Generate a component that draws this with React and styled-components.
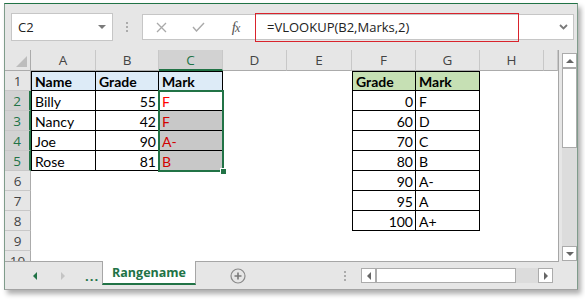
import React from 'react'
import styled, { createGlobalStyle, css } from 'styled-components'

const GREEN = '#217346'

const GlobalStyle = createGlobalStyle`
  html, body {
    margin: 0;
    padding: 0;
    background: #fff;
  }
  body {
    width: 585px;
    height: 300px;
    overflow: hidden;
    font-family: Lato, "Liberation Sans", sans-serif;
  }
`

const Page = styled.div`
  padding: 3px 0 0 4px;
`

const Window = styled.div`
  width: 574px;
  height: 287px;
  box-sizing: border-box;
  border: 1px solid #7f9c8b;
  border-top-color: ${GREEN};
  border-bottom-color: #a3a3a3;
  box-shadow: 3px 4px 5px rgba(0, 0, 0, 0.32);
  background: #e6e6e6;
  display: flex;
  flex-direction: column;
  overflow: hidden;
`

/* ---------- formula toolbar ---------- */

const Toolbar = styled.div`
  height: 46px;
  flex: none;
  display: flex;
  align-items: center;
  padding: 0 0 0 6px;
  box-sizing: border-box;
  font-family: "Open Sans", "Liberation Sans", sans-serif;
`

const NameBox = styled.div`
  width: 102px;
  height: 28px;
  box-sizing: border-box;
  background: #fff;
  border: 1px solid #c6c6c6;
  display: flex;
  align-items: center;
  justify-content: space-between;
  padding: 0 6px 0 6px;
  font-size: 13px;
  color: #222;
`

const DownTriangle = styled.span`
  width: 0;
  height: 0;
  border-left: 4px solid transparent;
  border-right: 4px solid transparent;
  border-top: 4px solid #7a7a7a;
`

const Grip = styled.div`
  display: flex;
  flex-direction: column;
  gap: 2px;
  margin: 0 ${p => p.$right}px 0 ${p => p.$left}px;
  span {
    width: 2px;
    height: 2px;
    background: #ababab;
  }
`

const FormulaBar = styled.div`
  width: 432px;
  height: 26px;
  box-sizing: border-box;
  background: #fff;
  border: 1px solid #c6c6c6;
  display: flex;
  align-items: center;
`

const FuncArea = styled.div`
  width: 112px;
  display: flex;
  align-items: center;
`

const IconSlot = styled.div`
  width: 37px;
  display: flex;
  justify-content: center;
  align-items: center;
`

const Fx = styled.span`
  font-family: "Liberation Serif", serif;
  font-style: italic;
  font-size: 15px;
  color: #555;
  letter-spacing: -1px;
  small {
    font-size: 12px;
  }
`

const FormulaInput = styled.div`
  width: 264px;
  height: 29px;
  box-sizing: border-box;
  border: 1px solid #d9232c;
  display: flex;
  align-items: center;
  padding-left: 11px;
  font-size: 13px;
  color: #222;
`

const FormulaRest = styled.div`
  flex: 1;
  display: flex;
  justify-content: flex-end;
  padding-right: 5px;
`

/* ---------- sheet ---------- */

const Body = styled.div`
  height: 212px;
  flex: none;
  display: flex;
`

const Sheet = styled.div`
  width: 554px;
  height: 212px;
  box-sizing: border-box;
  background: #fff;
  border-right: 1px solid #a6a6a6;
  border-bottom: 1px solid #a6a6a6;
  overflow: hidden;
  display: grid;
  grid-template-columns: 26px 65px 63px 64px 64px 65px 64px 64px 64px 14px;
  grid-template-rows: 21px repeat(10, 20px);
`

const placed = css`
  grid-row: ${p => p.$gr};
  grid-column: ${p => p.$gc};
  box-sizing: border-box;
`

const Corner = styled.div`
  ${placed}
  background: #e6e6e6;
  border-right: 1px solid #ababab;
  border-bottom: 1px solid #ababab;
  display: flex;
  align-items: flex-end;
  justify-content: flex-end;
  padding: 0 3px 3px 0;
  &::after {
    content: '';
    width: 0;
    height: 0;
    border-left: 11px solid transparent;
    border-bottom: 11px solid #bdbdbd;
  }
`

const ColHead = styled.div`
  ${placed}
  background: ${p => (p.$sel ? '#d2d2d2' : '#e6e6e6')};
  color: ${p => (p.$sel ? GREEN : '#444')};
  border-right: 1px solid #c8c8c8;
  border-bottom: ${p => (p.$sel ? `2px solid ${GREEN}` : '1px solid #ababab')};
  display: flex;
  align-items: center;
  justify-content: center;
  font-family: "Open Sans", "Liberation Sans", sans-serif;
  font-size: 13.5px;
  padding-top: ${p => (p.$sel ? 1 : 0)}px;
`

const RowHead = styled.div`
  ${placed}
  background: ${p => (p.$sel ? '#d2d2d2' : '#e6e6e6')};
  color: ${p => (p.$sel ? GREEN : '#444')};
  border-bottom: 1px solid #c8c8c8;
  border-right: ${p => (p.$sel ? `2px solid ${GREEN}` : '1px solid #ababab')};
  display: flex;
  align-items: center;
  justify-content: center;
  font-family: "Open Sans", "Liberation Sans", sans-serif;
  font-size: 13.5px;
`

const Cell = styled.div`
  ${placed}
  background: ${p => p.$bg || '#fff'};
  color: ${p => p.$color || '#000'};
  font-weight: ${p => (p.$bold ? 700 : 400)};
  font-size: 14px;
  display: flex;
  align-items: center;
  justify-content: ${p => (p.$right ? 'flex-end' : 'flex-start')};
  padding: 1px ${p => (p.$right ? 2 : 0)}px 0 ${p => (p.$right ? 0 : 3)}px;
  white-space: nowrap;
  overflow: hidden;
  border-right: ${p => (p.$boxed ? '1px solid #000' : 'none')};
  border-bottom: ${p => (p.$boxed ? '1px solid #000' : 'none')};
  border-left: ${p => (p.$left ? '1px solid #000' : 'none')};
  border-top: ${p => (p.$top ? '1px solid #000' : 'none')};
`

const Selection = styled.div`
  grid-column: 4 / 5;
  grid-row: 3 / 7;
  margin: -1px -1px -1px -1px;
  border: 2px solid ${GREEN};
  position: relative;
  pointer-events: none;
  z-index: 2;
`

const FillHandle = styled.span`
  position: absolute;
  right: -5px;
  bottom: -5px;
  width: 5px;
  height: 5px;
  background: ${GREEN};
  border: 1px solid #fff;
`

/* ---------- scroll bars ---------- */

const VScrollCol = styled.div`
  flex: 1;
  padding: 3px 0 0 3px;
`

const VScroll = styled.div`
  width: 15px;
  height: 208px;
  display: flex;
  flex-direction: column;
  background: #dcdcdc;
`

const ScrollBtn = styled.div`
  flex: none;
  width: 15px;
  height: 15px;
  box-sizing: border-box;
  background: #fff;
  border: 1px solid #ababab;
  display: flex;
  align-items: center;
  justify-content: center;
`

const Thumb = styled.div`
  flex: none;
  box-sizing: border-box;
  background: #fff;
  border: 1px solid #ababab;
  width: ${p => p.$w || '15px'};
  height: ${p => p.$h || '15px'};
`

const Track = styled.div`
  flex: 1;
`

const Arrow = styled.span`
  flex: none;
  width: 0;
  height: 0;
  ${p => p.$dir === 'up' && `
    border-left: 4px solid transparent;
    border-right: 4px solid transparent;
    border-bottom: 4px solid ${p.$c || '#666'};
  `}
  ${p => p.$dir === 'down' && `
    border-left: 4px solid transparent;
    border-right: 4px solid transparent;
    border-top: 4px solid ${p.$c || '#666'};
  `}
  ${p => p.$dir === 'left' && `
    border-top: 4px solid transparent;
    border-bottom: 4px solid transparent;
    border-right: 4px solid ${p.$c || '#666'};
  `}
  ${p => p.$dir === 'right' && `
    border-top: 4px solid transparent;
    border-bottom: 4px solid transparent;
    border-left: 4px solid ${p.$c || '#666'};
  `}
  margin-left: ${p => p.$ml || 0}px;
`

/* ---------- tab bar ---------- */

const TabBar = styled.div`
  flex: 1;
  display: flex;
  align-items: center;
  font-family: "Open Sans", "Liberation Sans", sans-serif;
`

const Ellipsis = styled.span`
  flex: none;
  width: 17px;
  margin-left: 20px;
  color: ${GREEN};
  font-weight: 700;
  font-size: 13px;
  letter-spacing: 1px;
  line-height: 1;
  padding-top: 2px;
`

const Tab = styled.div`
  flex: none;
  align-self: flex-start;
  width: 94px;
  height: 24px;
  margin-top: -1px;
  box-sizing: border-box;
  background: #fff;
  border-left: 1px solid #a6a6a6;
  border-right: 1px solid #a6a6a6;
  border-bottom: 2px solid ${GREEN};
  color: ${GREEN};
  font-weight: 700;
  font-size: 12.5px;
  display: flex;
  align-items: center;
  justify-content: center;
  padding-top: 1px;
`

const AddSheet = styled.svg`
  margin-left: 34px;
  flex: none;
`

const HScroll = styled.div`
  flex: none;
  width: 192px;
  height: 15px;
  display: flex;
  background: #dcdcdc;
`

const XIcon = () => (
  <svg width="11" height="11" viewBox="0 0 11 11">
    <path d="M1 1 L10 10 M10 1 L1 10" stroke="#a9a9a9" strokeWidth="1.3" fill="none" />
  </svg>
)

const CheckIcon = () => (
  <svg width="13" height="10" viewBox="0 0 13 10">
    <path d="M1 5 L4.5 9 L12 1" stroke="#a9a9a9" strokeWidth="1.4" fill="none" />
  </svg>
)

const Chevron = () => (
  <svg width="9" height="6" viewBox="0 0 9 6">
    <path d="M1 1 L4.5 4.5 L8 1" stroke="#7a7a7a" strokeWidth="1.8" fill="none" />
  </svg>
)

const COLS = ['A', 'B', 'C', 'D', 'E', 'F', 'G', 'H', 'I']
const people = [
  ['Billy', 55, 'F'],
  ['Nancy', 42, 'F'],
  ['Joe', 90, 'A-'],
  ['Rose', 81, 'B'],
]
const marks = [
  [0, 'F'], [60, 'D'], [70, 'C'], [80, 'B'], [90, 'A-'], [95, 'A'], [100, 'A+'],
]

function cellProps(r, c) {
  const p = {}
  let text = ''
  const inT1 = r <= 5 && ['A', 'B', 'C'].includes(c)
  const inT2 = r <= 8 && ['F', 'G'].includes(c)
  if (inT1 || inT2) {
    p.$boxed = true
    if (r === 1) p.$top = true
    if (c === 'A' || c === 'F') p.$left = true
  }
  if (r === 1 && inT1) {
    p.$bg = '#ddebf7'
    p.$bold = true
    text = { A: 'Name', B: 'Grade', C: 'Mark' }[c]
  } else if (r === 1 && inT2) {
    p.$bg = '#c6e0b4'
    p.$bold = true
    text = { F: 'Grade', G: 'Mark' }[c]
  } else if (inT1) {
    const row = people[r - 2]
    if (c === 'A') text = row[0]
    if (c === 'B') { text = row[1]; p.$right = true }
    if (c === 'C') {
      text = row[2]
      p.$color = r === 2 ? '#ff0000' : '#d20000'
      if (r > 2) p.$bg = '#c8c8c8'
    }
  } else if (inT2) {
    const row = marks[r - 2]
    if (c === 'F') { text = row[0]; p.$right = true }
    if (c === 'G') text = row[1]
  }
  return [p, text]
}

export default function App() {
  const rows = Array.from({ length: 10 }, (_, i) => i + 1)
  return (
    <Page>
      <GlobalStyle />
      <Window>
        <Toolbar>
          <NameBox>
            C2
            <DownTriangle />
          </NameBox>
          <Grip $left={13} $right={14}><span /><span /><span /></Grip>
          <FormulaBar>
            <FuncArea>
              <IconSlot><XIcon /></IconSlot>
              <IconSlot><CheckIcon /></IconSlot>
              <IconSlot><Fx>f<small>x</small></Fx></IconSlot>
            </FuncArea>
            <FormulaInput>=VLOOKUP(B2,Marks,2)</FormulaInput>
            <FormulaRest><Chevron /></FormulaRest>
          </FormulaBar>
        </Toolbar>

        <Body>
          <Sheet>
            <Corner $gr={1} $gc={1} />
            {COLS.map((c, ci) => (
              <ColHead key={c} $gr={1} $gc={ci + 2} $sel={c === 'C'}>
                {c === 'I' ? '' : c}
              </ColHead>
            ))}
            {rows.map(r => (
              <React.Fragment key={r}>
                <RowHead $gr={r + 1} $gc={1} $sel={r >= 2 && r <= 5}>{r}</RowHead>
                {COLS.map((c, ci) => {
                  const [p, text] = cellProps(r, c)
                  return (
                    <Cell key={c} $gr={r + 1} $gc={ci + 2} {...p}>{text}</Cell>
                  )
                })}
              </React.Fragment>
            ))}
            <Selection>
              <FillHandle />
            </Selection>
          </Sheet>
          <VScrollCol>
            <VScroll>
              <ScrollBtn><Arrow $dir="up" /></ScrollBtn>
              <Thumb $h="80px" />
              <Track />
              <ScrollBtn><Arrow $dir="down" /></ScrollBtn>
            </VScroll>
          </VScrollCol>
        </Body>

        <TabBar>
          <Arrow $dir="left" $c={GREEN} $ml={28} />
          <Arrow $dir="right" $c="#c4c4c4" $ml={24} />
          <Ellipsis>...</Ellipsis>
          <Tab>Rangename</Tab>
          <AddSheet width="16" height="16" viewBox="0 0 16 16">
            <circle cx="8" cy="8" r="7" stroke="#8a8a8a" strokeWidth="1.2" fill="none" />
            <path d="M8 4.5 V11.5 M4.5 8 H11.5" stroke="#7a7a7a" strokeWidth="1.6" />
          </AddSheet>
          <Grip $left={98} $right={15}><span /><span /><span /></Grip>
          <HScroll>
            <ScrollBtn><Arrow $dir="left" /></ScrollBtn>
            <Thumb $w="140px" />
            <Track />
            <ScrollBtn><Arrow $dir="right" /></ScrollBtn>
          </HScroll>
        </TabBar>
      </Window>
    </Page>
  )
}
